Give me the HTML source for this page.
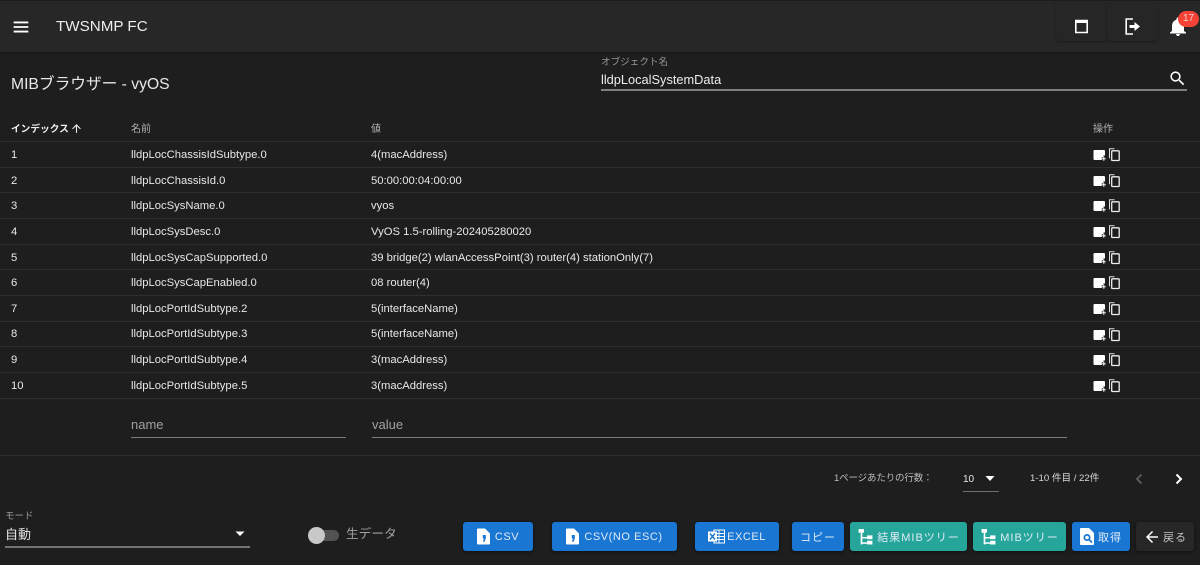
<!DOCTYPE html>
<html lang="ja"><head><meta charset="utf-8"><title>TWSNMP FC</title>
<style>
*{box-sizing:border-box}
html,body{margin:0;padding:0}
body{width:1200px;height:565px;overflow:hidden;background:#1e1e1e;color:#fff;font-family:"Liberation Sans","Noto Sans CJK JP",sans-serif;position:relative}
.a{position:absolute;white-space:nowrap}
.bar{left:0;top:1px;width:1200px;height:51px;background:#272727;box-shadow:0 1px 3px rgba(0,0,0,.3)}
.line{position:absolute;left:0;width:1200px;height:1px;background:#2f2f2f}
.t{font-size:11.25px;line-height:14px;color:#e8e8e8}
.h{font-size:10px;line-height:14px;color:#b0b0b0}
.ul{position:absolute;height:1px;background:#7c7c7c}
.btn{position:absolute;top:522px;height:29px;border-radius:3px;background:#1976d2;color:#dfeaf6;font-size:11px;letter-spacing:1px;display:flex;align-items:center;justify-content:center;white-space:nowrap;box-shadow:0 1px 3px rgba(0,0,0,.5)}
.l{letter-spacing:.55px}
.g{background:#26a69a}
.ic{position:absolute}
svg{display:block}
</style></head><body>
<div class="a bar"></div>
<svg class="ic" style="left:10px;top:16px" width="22" height="22" viewBox="0 0 24 24" fill="#fff"><path d="M4 18h16v-2H4v2zm0-5h16v-2H4v2zm0-7v2h16V6H4z"/></svg>
<div class="a" style="left:56px;top:17px;font-size:15.2px;line-height:20px;color:#ededed">TWSNMP FC</div>
<div class="a" style="left:1056px;top:2px;width:51px;height:39px;background:#262626;border-radius:4px;box-shadow:0 1px 2px rgba(0,0,0,.35)"></div>
<div class="a" style="left:1107px;top:2px;width:51px;height:39px;background:#262626;border-radius:4px;box-shadow:0 1px 2px rgba(0,0,0,.35)"></div>
<svg class="ic" style="left:1074px;top:19px" width="15" height="15" viewBox="0 0 15 15"><path d="M1.800 1.500h11.400v12H1.800z" fill="none" stroke="#fff" stroke-width="1.600"/><rect x="1" y="1" width="13" height="3" fill="#fff"/></svg>
<svg class="ic" style="left:1124px;top:18px" width="17" height="17" viewBox="0 0 17 17"><path d="M9 1H2.200v15H9" fill="none" stroke="#fff" stroke-width="1.600"/><path d="M5.500 7h5V4l5.500 4.500-5.500 4.500v-3h-5z" fill="#fff"/></svg>
<svg class="ic" style="left:1168px;top:16px" width="20" height="21" viewBox="0 0 20 21" fill="#fff"><path d="M10 20c1.100 0 2-.9 2-2H8c0 1.100.9 2 2 2zm6-5V10c0-3-1.600-5.600-4.500-6.300V3a1.500 1.500 0 0 0-3 0v.7C5.600 4.400 4 7 4 10v5l-2 1.500v1h16v-1z"/></svg>
<div class="a" style="left:1178px;top:11px;width:21px;height:16px;border-radius:8px;background:#f44336;color:#f3d0cc;font-size:10px;line-height:16px;text-align:center">17</div>

<div class="a" style="left:11px;top:75px;font-size:15.700px;line-height:20px;color:#e8e8e8">MIBブラウザー - vyOS</div>
<div class="a" style="left:601px;top:56px;font-size:9.600px;line-height:13px;color:#969696">オブジェクト名</div>
<div class="a" style="left:601px;top:71px;font-size:12.800px;line-height:17px;color:#ececec">lldpLocalSystemData</div>
<div class="ul" style="left:601px;top:89px;width:586px;height:1.500px;background:#7e7e7e"></div>
<svg class="ic" style="left:1168px;top:69px" width="19" height="19" viewBox="0 0 24 24" fill="#fff"><path d="M15.500 14h-.79l-.28-.27A6.470 6.470 0 0 0 16 9.500 6.500 6.500 0 1 0 9.500 16c1.610 0 3.090-.59 4.230-1.570l.27.28v.79l5 4.990L20.490 19l-4.990-5zm-6 0C7.010 14 5 11.990 5 9.500S7.010 5 9.500 5 14 7.010 14 9.500 11.990 14 9.500 14z"/></svg>

<div class="a h" style="left:11px;top:123px;font-size:9.700px;color:#f0f0f0;font-weight:bold">インデックス</div>
<svg class="ic" style="left:70px;top:122px" width="13" height="13" viewBox="0 0 24 24" fill="#eee"><path d="M4 12l1.410 1.410L11 7.830V20h2V7.830l5.580 5.590L20 12l-8-8-8 8z"/></svg>
<div class="a h" style="left:131px;top:123px">名前</div>
<div class="a h" style="left:371px;top:123px">値</div>
<div class="a h" style="left:1093px;top:123px">操作</div>

<div class="line" style="top:141px"></div><div class="line" style="top:167px"></div><div class="line" style="top:192px"></div><div class="line" style="top:218px"></div><div class="line" style="top:244px"></div><div class="line" style="top:269px"></div><div class="line" style="top:295px"></div><div class="line" style="top:321px"></div><div class="line" style="top:346px"></div><div class="line" style="top:372px"></div><div class="line" style="top:398px"></div><div class="line" style="top:455px"></div>

<div class="a t" style="left:11px;top:148px">1</div><div class="a t" style="left:131px;top:148px">lldpLocChassisIdSubtype.0</div><div class="a t" style="left:371px;top:148px">4(macAddress)</div>
<div class="a t" style="left:11px;top:174px">2</div><div class="a t" style="left:131px;top:174px">lldpLocChassisId.0</div><div class="a t" style="left:371px;top:174px">50:00:00:04:00:00</div>
<div class="a t" style="left:11px;top:199px">3</div><div class="a t" style="left:131px;top:199px">lldpLocSysName.0</div><div class="a t" style="left:371px;top:199px">vyos</div>
<div class="a t" style="left:11px;top:225px">4</div><div class="a t" style="left:131px;top:225px">lldpLocSysDesc.0</div><div class="a t" style="left:371px;top:225px">VyOS 1.5-rolling-202405280020</div>
<div class="a t" style="left:11px;top:251px">5</div><div class="a t" style="left:131px;top:251px">lldpLocSysCapSupported.0</div><div class="a t" style="left:371px;top:251px">39 bridge(2) wlanAccessPoint(3) router(4) stationOnly(7)</div>
<div class="a t" style="left:11px;top:276px">6</div><div class="a t" style="left:131px;top:276px">lldpLocSysCapEnabled.0</div><div class="a t" style="left:371px;top:276px">08 router(4)</div>
<div class="a t" style="left:11px;top:302px">7</div><div class="a t" style="left:131px;top:302px">lldpLocPortIdSubtype.2</div><div class="a t" style="left:371px;top:302px">5(interfaceName)</div>
<div class="a t" style="left:11px;top:327px">8</div><div class="a t" style="left:131px;top:327px">lldpLocPortIdSubtype.3</div><div class="a t" style="left:371px;top:327px">5(interfaceName)</div>
<div class="a t" style="left:11px;top:353px">9</div><div class="a t" style="left:131px;top:353px">lldpLocPortIdSubtype.4</div><div class="a t" style="left:371px;top:353px">3(macAddress)</div>
<div class="a t" style="left:11px;top:379px">10</div><div class="a t" style="left:131px;top:379px">lldpLocPortIdSubtype.5</div><div class="a t" style="left:371px;top:379px">3(macAddress)</div>

<svg width="0" height="0" style="position:absolute"><defs><g id="acts"><path d="M1.500 2h9.500a1 1 0 0 1 1 1v4.500h-1.500V9.200H8.800V12H1.500a1 1 0 0 1-1-1V3a1 1 0 0 1 1-1z" fill="#fff"/><path d="M10.300 8.800v1.400H9v1h1.300v1.500h1v-1.500h1.400v-1h-1.400V8.800z" fill="#fff"/><path d="M21.500 .7H16.500v9.500" fill="none" stroke="#ddd" stroke-width="1"/><rect x="18.700" y="2.800" width="7.500" height="9.700" rx=".8" fill="none" stroke="#eee" stroke-width="1.300"/></g></defs></svg>
<svg class="ic" style="left:1093px;top:148px" width="28" height="14" viewBox="0 0 28 14"><use href="#acts"/></svg>
<svg class="ic" style="left:1093px;top:174px" width="28" height="14" viewBox="0 0 28 14"><use href="#acts"/></svg>
<svg class="ic" style="left:1093px;top:199px" width="28" height="14" viewBox="0 0 28 14"><use href="#acts"/></svg>
<svg class="ic" style="left:1093px;top:225px" width="28" height="14" viewBox="0 0 28 14"><use href="#acts"/></svg>
<svg class="ic" style="left:1093px;top:251px" width="28" height="14" viewBox="0 0 28 14"><use href="#acts"/></svg>
<svg class="ic" style="left:1093px;top:276px" width="28" height="14" viewBox="0 0 28 14"><use href="#acts"/></svg>
<svg class="ic" style="left:1093px;top:302px" width="28" height="14" viewBox="0 0 28 14"><use href="#acts"/></svg>
<svg class="ic" style="left:1093px;top:328px" width="28" height="14" viewBox="0 0 28 14"><use href="#acts"/></svg>
<svg class="ic" style="left:1093px;top:353px" width="28" height="14" viewBox="0 0 28 14"><use href="#acts"/></svg>
<svg class="ic" style="left:1093px;top:379px" width="28" height="14" viewBox="0 0 28 14"><use href="#acts"/></svg>

<div class="a" style="left:131px;top:416px;font-size:13px;line-height:17px;color:#a0a0a0">name</div>
<div class="ul" style="left:131px;top:437px;width:215px"></div>
<div class="a" style="left:372px;top:416px;font-size:13px;line-height:17px;color:#a0a0a0">value</div>
<div class="ul" style="left:372px;top:437px;width:695px"></div>

<div class="a" style="left:834px;top:472px;font-size:9.500px;line-height:14px;color:#bcbcbc;letter-spacing:-.15px">1ページあたりの行数：</div>
<div class="a" style="left:963px;top:473px;font-size:10px;line-height:14px;color:#e8e8e8">10</div>
<svg class="ic" style="left:984px;top:476px" width="12" height="6" viewBox="0 0 12 6"><path d="M1.500 0h9L6 5z" fill="#fff"/></svg>
<div class="ul" style="left:963px;top:491px;width:36px;background:#707070"></div>
<div class="a" style="left:1030px;top:472px;font-size:9.600px;line-height:14px;color:#d8d8d8">1-10 件目 / 22件</div>
<svg class="ic" style="left:1133px;top:472px" width="12" height="14" viewBox="0 0 12 14"><path d="M8.500 2.500L4 7l4.500 4.500" fill="none" stroke="#5f5f5f" stroke-width="1.800"/></svg>
<svg class="ic" style="left:1173px;top:472px" width="12" height="14" viewBox="0 0 12 14"><path d="M3.500 2.500L8 7l-4.500 4.500" fill="none" stroke="#fff" stroke-width="2"/></svg>

<div class="a" style="left:5px;top:511px;font-size:9.500px;line-height:12px;color:#9a9a9a">モード</div>
<div class="a" style="left:5px;top:526px;font-size:13px;line-height:17px;color:#e4e4e4">自動</div>
<svg class="ic" style="left:235px;top:531px" width="10" height="6" viewBox="0 0 10 6"><path d="M.500 .500h9L5 5z" fill="#fff"/></svg>
<div class="ul" style="left:5px;top:546px;width:245px;height:1.500px;background:#737373"></div>
<div class="a" style="left:310px;top:530px;width:29px;height:11px;border-radius:6px;background:#525252"></div>
<div class="a" style="left:308px;top:527px;width:17px;height:17px;border-radius:50%;background:#c8c8c8"></div>
<div class="a" style="left:346px;top:526px;font-size:12.700px;line-height:17px;color:#a0a0a0">生データ</div>

<svg width="0" height="0" style="position:absolute"><defs>
<g id="csv"><path d="M1 0h7l5 5v10a1 1 0 0 1-1 1H1a1 1 0 0 1-1-1V1a1 1 0 0 1 1-1z" fill="#fff"/><path d="M5.800 6.500h3v3.500l-1.300 3.200H6l.9-3.200H5.800z" fill="#1976d2"/></g>
<g id="tree" fill="#fff"><rect x="0" y="0" width="5" height="3.500"/><rect x="2" y="3.500" width="1.500" height="11"/><rect x="2" y="7.500" width="6" height="1.400"/><rect x="2" y="12.500" width="6" height="1.400"/><rect x="8" y="6" width="5" height="3.500"/><rect x="8" y="11" width="5" height="3.500"/></g>
</defs></svg>

<div class="btn l" style="left:463px;width:70px"><svg width="14" height="17" viewBox="0 0 14 16" style="margin-right:4px"><use href="#csv"/></svg>CSV</div>
<div class="btn l" style="left:552px;width:125px"><svg width="14" height="17" viewBox="0 0 14 16" style="margin-right:4px"><use href="#csv"/></svg>CSV(NO ESC)</div>
<div class="btn l" style="left:695px;width:84px"><svg width="17" height="15" viewBox="0 0 17 15" style="margin-right:2px"><path d="M6 1h10.500v13H6z" fill="none" stroke="#fff"/><path d="M6 4.500h10.500M6 7.500h10.500M6 10.500h10.500M11 1v13" stroke="#fff" fill="none"/><rect x="0" y="2.500" width="9" height="10" fill="#fff"/><path d="M2 4.500l5 6M7 4.500l-5 6" stroke="#1976d2" stroke-width="1.400"/></svg>EXCEL</div>
<div class="btn" style="left:792px;width:52px">コピー</div>
<div class="btn g" style="left:850px;width:117px"><svg width="15" height="16" viewBox="0 0 13 15" style="margin-right:4px;margin-left:1px"><use href="#tree"/></svg>結果MIBツリー</div>
<div class="btn g" style="left:973px;width:93px"><svg width="15" height="16" viewBox="0 0 13 15" style="margin-right:4px;margin-left:1px"><use href="#tree"/></svg>MIBツリー</div>
<div class="btn" style="left:1072px;width:58px"><svg width="14" height="17" viewBox="0 0 14 17" style="margin-right:4px"><path d="M1 0h8l5 5v11a1 1 0 0 1-1 1H1a1 1 0 0 1-1-1V1a1 1 0 0 1 1-1z" fill="#fff"/><circle cx="7" cy="9.500" r="3" fill="#1976d2" stroke="#1976d2"/><circle cx="7" cy="9.500" r="1.800" fill="#fff"/><path d="M9 11.500l3 3" stroke="#1976d2" stroke-width="1.600"/></svg>取得</div>
<div class="btn" style="left:1136px;width:58px;background:#272727;color:#c4c4c4"><svg width="18" height="18" viewBox="0 0 24 24" fill="#fff" style="margin-right:2px"><path d="M20 11H7.830l5.590-5.590L12 4l-8 8 8 8 1.410-1.410L7.830 13H20v-2z"/></svg>戻る</div>
</body></html>
